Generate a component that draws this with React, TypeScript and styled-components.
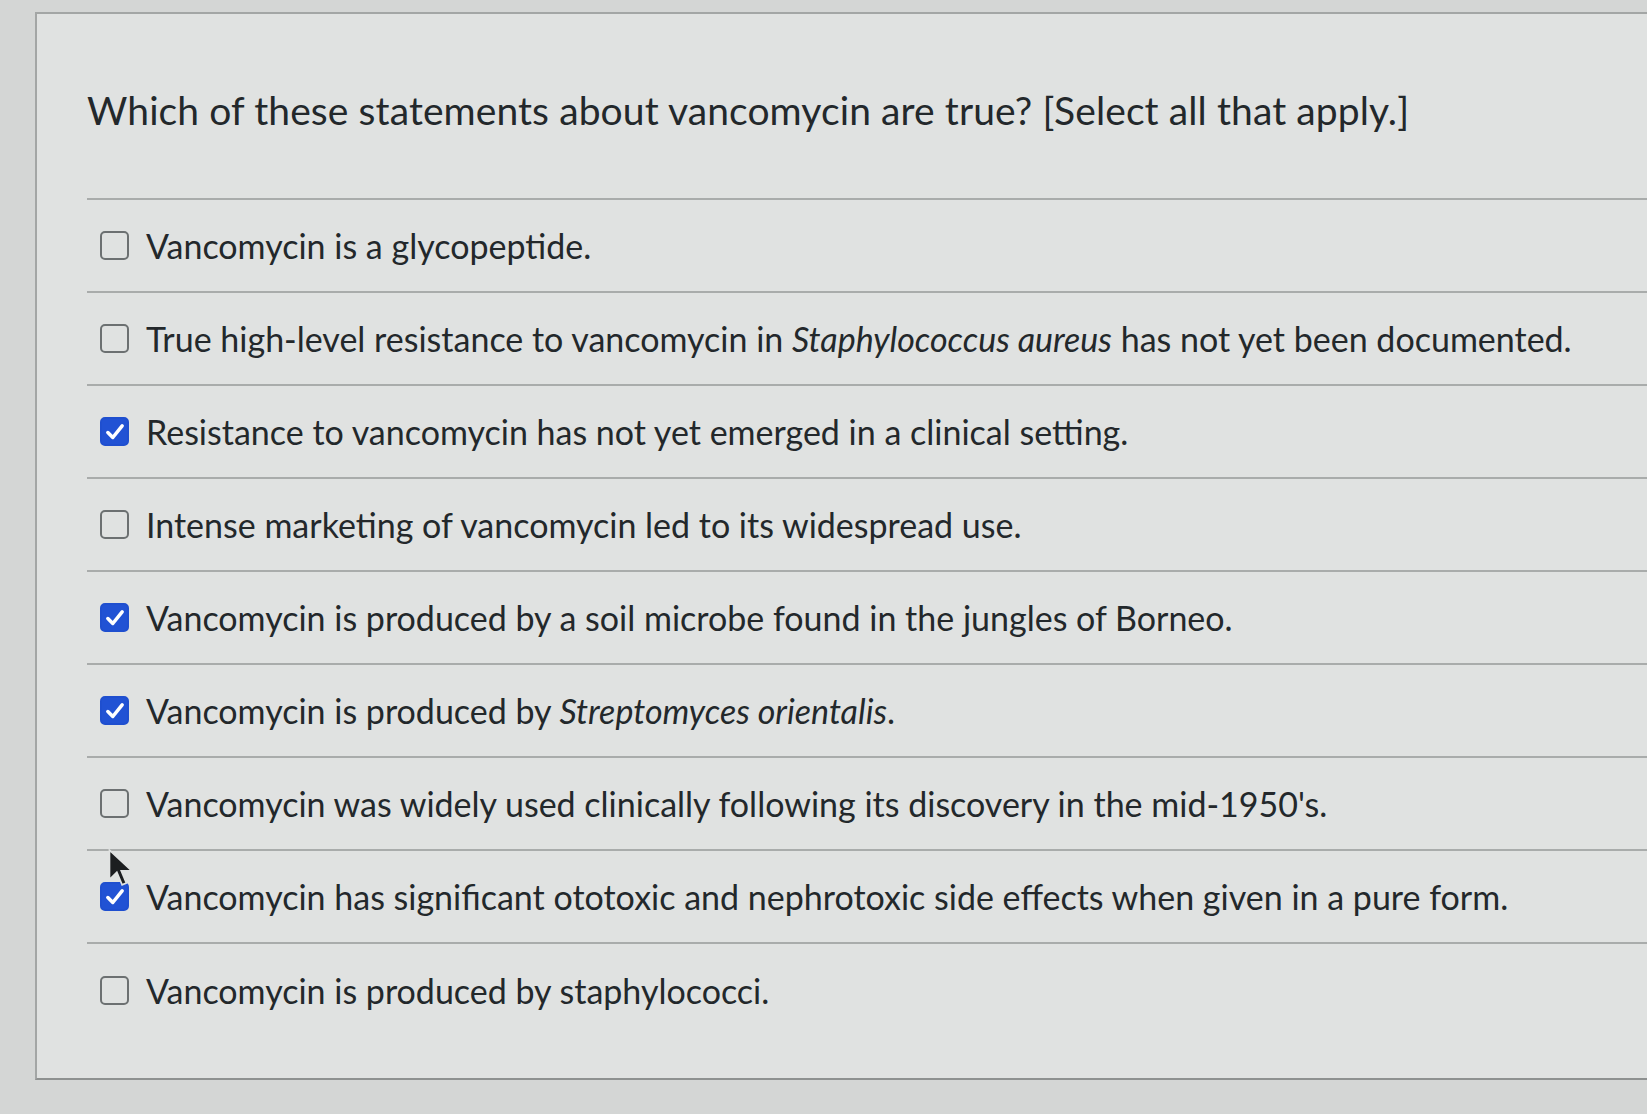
import React from 'react';
import styled, { createGlobalStyle } from 'styled-components';

const GlobalStyle = createGlobalStyle`
  html, body {
    margin: 0;
    padding: 0;
    background: #d4d6d5;
    overflow: hidden;
  }
  body {
    font-family: Lato, "Open Sans", "Liberation Sans", sans-serif;
  }
`;

interface Choice {
  content: React.ReactNode;
  checked: boolean;
}

const choices: Choice[] = [
  { content: 'Vancomycin is a glycopeptide.', checked: false },
  {
    content: (
      <>
        True high-level resistance to vancomycin in <em>Staphylococcus aureus</em> has not yet been documented.
      </>
    ),
    checked: false,
  },
  { content: 'Resistance to vancomycin has not yet emerged in a clinical setting.', checked: true },
  { content: 'Intense marketing of vancomycin led to its widespread use.', checked: false },
  { content: 'Vancomycin is produced by a soil microbe found in the jungles of Borneo.', checked: true },
  {
    content: (
      <>
        Vancomycin is produced by <em>Streptomyces orientalis</em>.
      </>
    ),
    checked: true,
  },
  { content: "Vancomycin was widely used clinically following its discovery in the mid-1950's.", checked: false },
  {
    content: 'Vancomycin has significant ototoxic and nephrotoxic side effects when given in a pure form.',
    checked: true,
  },
  { content: 'Vancomycin is produced by staphylococci.', checked: false },
];

const Page = styled.div`
  padding: 12px 0 0 35px;
  height: 1114px;
  box-sizing: border-box;
`;

const Card = styled.div`
  position: relative;
  background: #e0e2e1;
  border-top: 2px solid #a3a6a5;
  border-left: 2px solid #a3a6a5;
  border-bottom: 2px solid #8e9190;
  height: 1068px;
  box-sizing: border-box;
  padding-left: 50px;
`;

const Header = styled.div`
  height: 186px;
  display: flex;
  align-items: center;
  border-bottom: 2px solid #a9acab;
  padding-top: 8px;
  box-sizing: border-box;
`;

const Title = styled.h1`
  margin: 0;
  font-size: 39px;
  font-weight: 400;
  color: #23282b;
  letter-spacing: 0.1px;
`;

const List = styled.div`
  display: flex;
  flex-direction: column;
`;

const Row = styled.label<{ $last?: boolean }>`
  display: flex;
  align-items: center;
  gap: 17px;
  height: 93px;
  padding-left: 13px;
  border-bottom: ${p => (p.$last ? 'none' : '2px solid #a9acab')};
  box-sizing: border-box;
`;

const Box = styled.span<{ $checked: boolean }>`
  flex: none;
  width: 29px;
  height: 29px;
  border-radius: 5px;
  box-sizing: border-box;
  border: ${p => (p.$checked ? '2px solid #1f4fcf' : '2.5px solid #6c7071')};
  background: ${p => (p.$checked ? '#2152d4' : 'transparent')};
  display: flex;
  align-items: center;
  justify-content: center;

  svg {
    width: 22px;
    height: 22px;
  }
`;

const Label = styled.span`
  font-size: 34px;
  color: #23282b;
  white-space: nowrap;

  em {
    font-style: italic;
  }
`;

const Cursor = styled.svg`
  position: absolute;
  left: 70px;
  top: 834px;
  width: 26px;
  height: 40px;
`;

const Check = () => (
  <svg viewBox="0 0 20 20">
    <path d="M3.5 10.5 L8 15 L16.5 4.5" fill="none" stroke="#ffffff" strokeWidth="3.2" strokeLinecap="round" strokeLinejoin="round" />
  </svg>
);

export default function App() {
  return (
    <>
      <GlobalStyle />
      <Page>
        <Card>
          <Header>
            <Title>Which of these statements about vancomycin are true? [Select all that apply.]</Title>
          </Header>
          <List>
            {choices.map((c, i) => (
              <Row key={i} $last={i === choices.length - 1}>
                <Box $checked={c.checked}>{c.checked && <Check />}</Box>
                <Label>{c.content}</Label>
              </Row>
            ))}
          </List>
          <Cursor viewBox="0 0 12 19">
            <path d="M1 1 L1 15 L4.5 11.5 L7 17.5 L9 16.6 L6.6 10.8 L11.5 10.8 Z" fill="#1c1e20" stroke="#e0e2e1" strokeWidth="0.8" />
          </Cursor>
        </Card>
      </Page>
    </>
  );
}
